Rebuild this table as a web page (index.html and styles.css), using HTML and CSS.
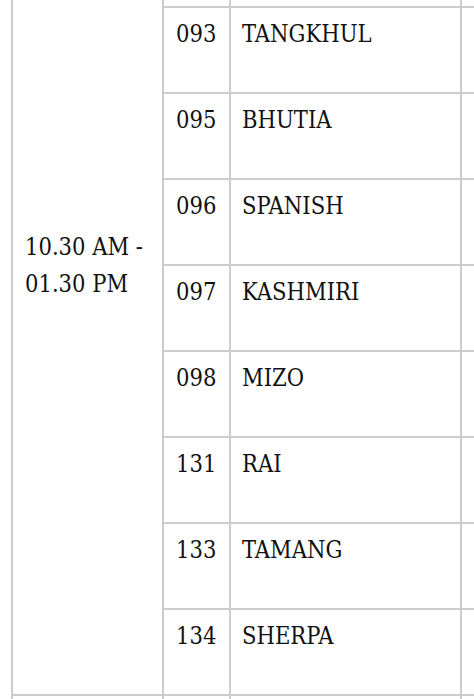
FILE: index.html
```html
<!DOCTYPE html>
<html>
<head>
<meta charset="utf-8">
<link rel="stylesheet" href="styles.css">
</head>
<body>
<div class="viewport">
<table class="schedule">
<colgroup>
<col class="c-time">
<col class="c-code">
<col class="c-name">
<col class="c-extra">
</colgroup>
<tbody>
<tr><td class="time" rowspan="10">10.30 AM -<br>01.30 PM</td><td></td><td></td><td></td></tr>
<tr><td></td><td></td><td></td></tr>
<tr><td>093</td><td class="name">TANGKHUL</td><td></td></tr>
<tr><td>095</td><td class="name">BHUTIA</td><td></td></tr>
<tr><td>096</td><td class="name">SPANISH</td><td></td></tr>
<tr><td>097</td><td class="name">KASHMIRI</td><td></td></tr>
<tr><td>098</td><td class="name">MIZO</td><td></td></tr>
<tr><td>131</td><td class="name">RAI</td><td></td></tr>
<tr><td>133</td><td class="name">TAMANG</td><td></td></tr>
<tr><td>134</td><td class="name">SHERPA</td><td></td></tr>
<tr><td></td><td></td><td></td><td></td></tr>
</tbody>
</table>
</div>
</body>
</html>
```
FILE: styles.css
```css
html, body {
  margin: 0;
  padding: 0;
  background: #ffffff;
}
.viewport {
  width: 474px;
  height: 699px;
  overflow: hidden;
}
.schedule {
  border-collapse: collapse;
  table-layout: fixed;
  width: 700px;
  margin-top: -166px;
  margin-left: 11px;
  font-family: "DejaVu Serif Condensed", "DejaVu Serif", "Liberation Serif", serif;
  font-stretch: condensed;
  font-size: 23.5px;
  line-height: 37px;
  color: #111111;
}
.c-time { width: 151px; }
.c-code { width: 67px; }
.c-name { width: 231px; }
.c-extra { width: 251px; }
.schedule td {
  border: 2px solid #cccccc;
  height: 68px;
  padding: 8px 12px 8px 12px;
  vertical-align: top;
  white-space: nowrap;
}
.schedule td.name {
  padding-left: 11px;
}
.schedule td.time {
  vertical-align: middle;
  padding: 10px 12px 8px 12px;
}
```
